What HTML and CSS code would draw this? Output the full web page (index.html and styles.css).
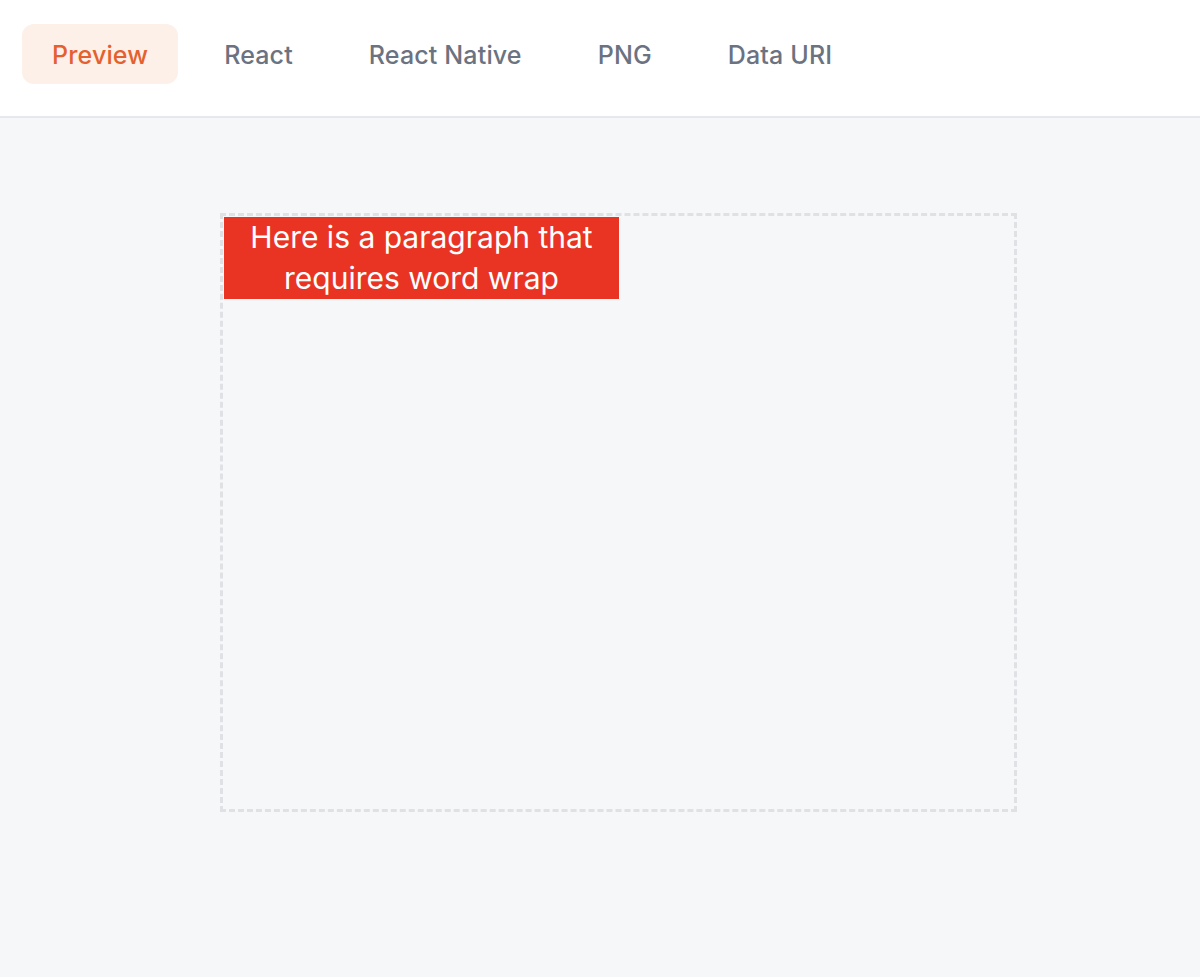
FILE: index.html
```html
<!DOCTYPE html>
<html lang="en">
  <head>
    <meta charset="UTF-8" />
    <meta name="viewport" content="width=device-width, initial-scale=1.0" />
    <title>Preview</title>
    <link rel="stylesheet" href="styles.css">
  </head>
  <body>
    <!-- Top tabs -->
    <header class="tabs">
      <button class="tab active">Preview</button>
      <button class="tab">React</button>
      <button class="tab">React Native</button>
      <button class="tab">PNG</button>
      <button class="tab">Data URI</button>
    </header>

    <!-- Preview area -->
    <main class="stage">
      <div class="canvas">
        <p class="para">Here is a paragraph that requires word wrap</p>
      </div>
    </main>
  </body>
</html>
```

FILE: styles.css
```css
/* Global Styles */
* {
  margin: 0;
  padding: 0;
  box-sizing: border-box;
}
body {
  font-family: Inter, "Noto Sans", sans-serif;
  background: #f6f7f9;
  min-height: 100vh;
}

/* Tabs */
.tabs {
  display: flex;
  gap: 16px;
  background: white;
  padding: 24px 22px 32px;
  border-bottom: 2px solid #e6e8eb;
}

.tab {
  font-family: inherit;
  font-size: 25px;
  font-weight: 500;
  letter-spacing: 0.15px;
  color: #6b7280;
  background: none;
  border: none;
  border-radius: 12px;
  height: 60px;
  padding: 2px 30px 0;
  cursor: pointer;
}

.tab.active {
  color: #e4612f;
  background: #fdf0e8;
}

/* Preview area */
.stage {
  padding: 95px 0 0 220px;
}

.canvas {
  width: 797px;
  height: 599px;
  border: 3px dashed #dfe1e4;
  padding: 1px;
}

.para {
  width: 395px;
  background: #e93424;
  color: white;
  font-size: 30px;
  line-height: 41px;
  text-align: center;
}
```
